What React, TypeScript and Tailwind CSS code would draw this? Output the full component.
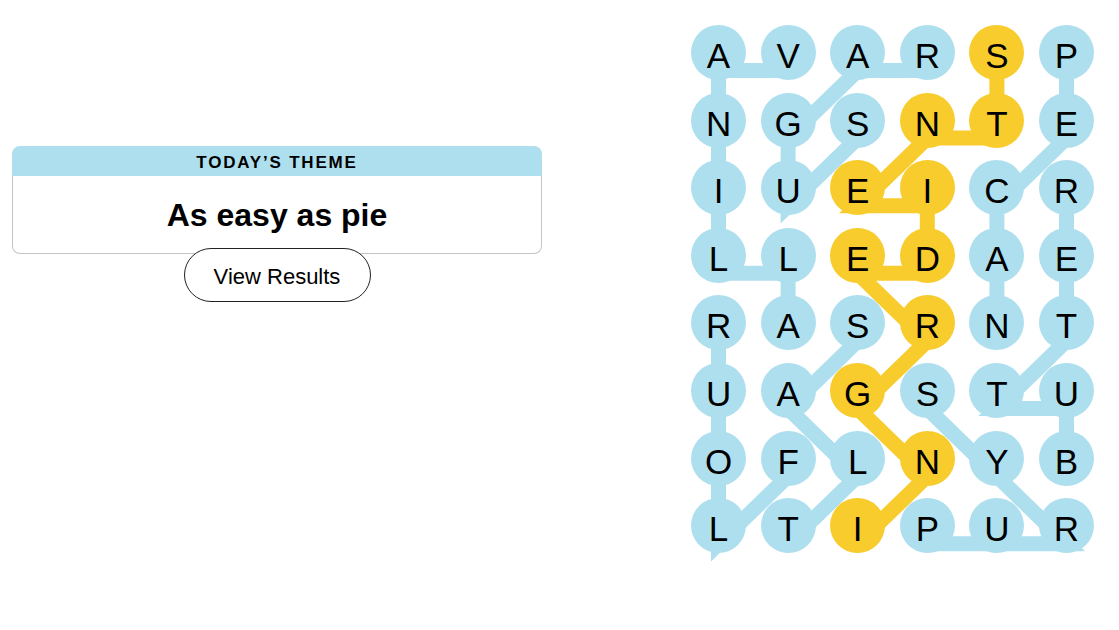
const GRID = ["AVARSP", "NGSNTE", "IUEICR", "LLEDAE", "RASRNT", "UAGSTU", "OFLNYB", "LTIPUR"]

// word paths as [row, col] pairs
const WORDS: [number, number][][] = [
  [[0, 1], [0, 0], [1, 0], [2, 0], [3, 0], [3, 1], [4, 1]],
  [[1, 2], [2, 1], [1, 1], [0, 2], [0, 3]],
  [[0, 5], [1, 5], [2, 4], [3, 4], [4, 4]],
  [[6, 5], [5, 5], [5, 4], [4, 5], [3, 5], [2, 5]],
  [[6, 1], [7, 0], [6, 0], [5, 0], [4, 0]],
  [[4, 2], [5, 1], [6, 2], [7, 1]],
  [[5, 3], [6, 4], [7, 5], [7, 4], [7, 3]],
]

const SPANGRAM: [number, number][] = [
  [7, 2], [6, 3], [5, 2], [4, 3], [3, 2], [3, 3], [2, 3], [2, 2], [1, 3], [1, 4], [0, 4],
]

const BLUE = "#aedfee"
const YELLOW = "#f7cc2c"

const toPoints = (path: [number, number][]) =>
  path.map(([r, c]) => `${27.5 + 69.6 * c},${27.5 + 67.6 * r + 18}`).join(" ")

const isSpan = (r: number, c: number) => SPANGRAM.some(([sr, sc]) => sr === r && sc === c)

const Board = () => {
  return (
    <div className="relative">
      <svg className="absolute left-0 top-0 overflow-visible" width={403} height={529}>
        {WORDS.map((w, i) => (
          <polyline key={i} points={toPoints(w)} fill="none" stroke={BLUE} strokeWidth={15} />
        ))}
        <polyline points={toPoints(SPANGRAM)} fill="none" stroke={YELLOW} strokeWidth={15} />
      </svg>
      <div className="relative grid grid-cols-[repeat(6,55px)] gap-x-[14.6px] gap-y-[12.6px]">
        {GRID.map((row, r) =>
          row.split("").map((ch, c) => (
            <div
              key={`${r}-${c}`}
              className={`w-[55px] h-[55px] rounded-full flex items-center justify-center pt-[6px] text-[35px] leading-none text-black ${
                isSpan(r, c) ? "bg-[#f7cc2c]" : "bg-[#aedfee]"
              }`}
            >
              {ch}
            </div>
          ))
        )}
      </div>
    </div>
  )
}

export default function App() {
  return (
    <div className="flex w-[1119px] h-[630px] bg-white font-['Liberation_Sans',Arial,sans-serif]">
      <div className="ml-3 pt-[146px] w-[530px] flex flex-col items-center">
        <div className="w-[530px]">
          <div className="h-[30px] pt-[4px] rounded-t-lg bg-[#aedfee] flex items-center justify-center">
            <span className="text-[17px] font-bold tracking-[1.8px] text-black">TODAY’S THEME</span>
          </div>
          <div className="h-[78px] border-x border-b border-[#c4c4c4] rounded-b-lg flex items-center justify-center">
            <span className="text-[32px] font-bold text-black">As easy as pie</span>
          </div>
        </div>
        <button className="-mt-1.5 w-[187px] h-[54px] pt-[2px] rounded-full border border-[#222] bg-white text-[22px] text-black">
          View Results
        </button>
      </div>
      <div className="ml-auto pt-[25px] pr-[25px]">
        <Board />
      </div>
    </div>
  )
}
